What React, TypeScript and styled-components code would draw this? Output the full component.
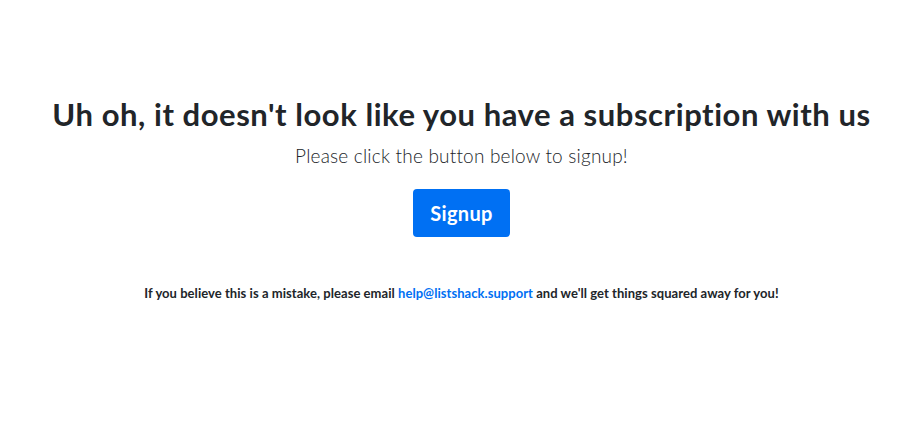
import React from "react";
import styled, { createGlobalStyle } from "styled-components";

const Global = createGlobalStyle`
  html, body { margin: 0; padding: 0; background: #fff; }
  body { font-family: "Lato", "Noto Sans", sans-serif; color: #212529; }
`;

const Page = styled.main`
  display: flex;
  flex-direction: column;
  align-items: center;
  padding-top: 93px;
  text-align: center;
`;

const Title = styled.h1`
  margin: 0;
  font-size: 31px;
  font-weight: 700;
  line-height: 42px;
  letter-spacing: 0.55px;
`;

const Subtitle = styled.p`
  margin: 7px 0 0;
  font-size: 19px;
  font-weight: 300;
  line-height: 28px;
  letter-spacing: 0.2px;
`;

const Button = styled.button`
  margin-top: 19px;
  width: 97px;
  height: 48px;
  border: none;
  border-radius: 4px;
  background: #0070f3;
  color: #fff;
  font-family: inherit;
  font-size: 20px;
  font-weight: 700;
  letter-spacing: 0.3px;
  cursor: pointer;
`;

const Note = styled.p`
  margin: 47px 0 0;
  font-size: 13px;
  font-weight: 700;
  line-height: 18px;
  letter-spacing: 0.05px;
`;

const Link = styled.a`
  color: #0070f3;
  text-decoration: none;
`;

export default function App() {
  return (
    <>
      <Global />
      <Page>
        <Title>Uh oh, it doesn't look like you have a subscription with us</Title>
        <Subtitle>Please click the button below to signup!</Subtitle>
        <Button>Signup</Button>
        <Note>
          If you believe this is a mistake, please email{" "}
          <Link href="#">help@listshack.support</Link> and we'll get things squared away for you!
        </Note>
      </Page>
    </>
  );
}
